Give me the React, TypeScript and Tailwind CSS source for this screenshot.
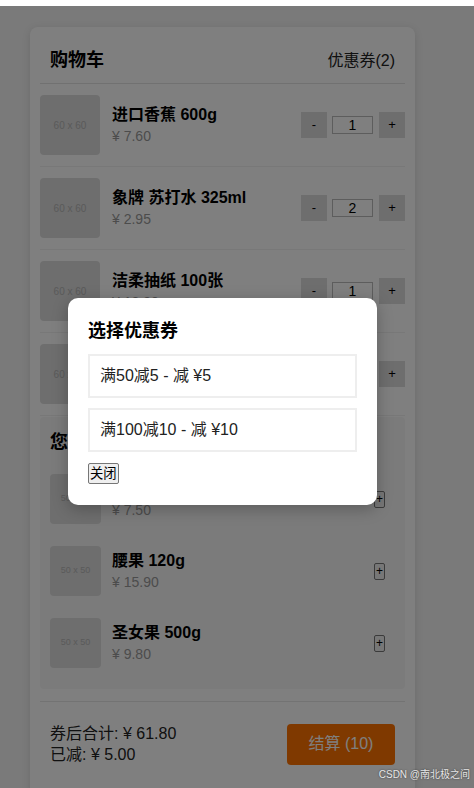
import React from "react";

const cartItems = [
  { name: "进口香蕉 600g", price: "7.60", qty: 1 },
  { name: "象牌 苏打水 325ml", price: "2.95", qty: 2 },
  { name: "洁柔抽纸 100张", price: "12.90", qty: 1 },
  { name: "农夫山泉 550ml", price: "2.00", qty: 6 },
];

const recItems = [
  { name: "蓝莓 125g", price: "7.50" },
  { name: "腰果 120g", price: "15.90" },
  { name: "圣女果 500g", price: "9.80" },
];

const coupons = ["满50减5 - 减 ¥5", "满100减10 - 减 ¥10"];

function CartRow({ name, price, qty }: { name: string; price: string; qty: number }) {
  return (
    <div className="flex items-center border-b border-[#f0f0f0] py-[11px]">
      <div className="flex h-[60px] w-[60px] shrink-0 items-center justify-center rounded-[4px] bg-[#dcdcdc] text-[10px] text-[#b5b5b5]">
        60 x 60
      </div>
      <div className="ml-[12px] flex-1">
        <div className="text-[16px] font-bold leading-[22px] text-black">{name}</div>
        <div className="text-[14px] leading-[20px] text-[#999]">¥ {price}</div>
      </div>
      <div className="flex items-center">
        <button className="h-[26px] w-[26px] bg-[#dddddd] text-[13px] text-black">-</button>
        <div className="ml-[5px] mr-[6px] flex h-[18px] w-[41px] items-center justify-center border border-[#bbb] bg-white text-[14px] text-black">
          {qty}
        </div>
        <button className="h-[26px] w-[26px] bg-[#dddddd] text-[13px] text-black">+</button>
      </div>
    </div>
  );
}

function RecRow({ name, price }: { name: string; price: string }) {
  return (
    <div className="flex items-center py-[11px]">
      <div className="flex h-[50px] w-[51px] shrink-0 items-center justify-center rounded-[4px] bg-[#dcdcdc] text-[9px] text-[#b5b5b5]">
        50 x 50
      </div>
      <div className="ml-[11px] flex-1">
        <div className="text-[16px] font-bold leading-[22px] text-black">{name}</div>
        <div className="text-[14px] leading-[20px] text-[#999]">¥ {price}</div>
      </div>
      <button className="mr-[10px] flex h-[17px] w-[11px] items-center justify-center rounded-[2px] border border-[#767676] bg-[#efefef] text-[12px] leading-none text-black">
        +
      </button>
    </div>
  );
}

export default function App() {
  return (
    <div className="relative h-[788px] overflow-hidden bg-white font-['Liberation_Sans','Noto_Sans_CJK_SC',sans-serif]">
      <div className="h-[6px] bg-white" />
      <div className="h-[782px] bg-[#f4f4f4] pt-[21px]">
        <div className="ml-[30px] w-[385px] rounded-[8px] bg-white p-[10px] shadow-[0_2px_8px_rgba(0,0,0,0.12)]">
          <div className="flex items-center justify-between border-b border-[#e2e2e2] px-[10px] pb-[9px] pt-[10px]">
            <h1 className="text-[18px] font-bold leading-[27px] text-black">购物车</h1>
            <span className="text-[16px] leading-[27px] text-[#222]">优惠券(2)</span>
          </div>
          {cartItems.map((it) => (
            <CartRow key={it.name} {...it} />
          ))}
          <div className="mt-[1px] rounded-[4px] bg-[#f6f6f6] px-[10px] pb-[10px] pt-[10px]">
            <h2 className="mb-[6px] text-[18px] font-bold leading-[30px] text-black">您可能还喜欢</h2>
            {recItems.map((it) => (
              <RecRow key={it.name} {...it} />
            ))}
          </div>
          <div className="mt-[12px] flex items-center justify-between border-t border-[#e6e6e6] px-[10px] pb-[21px] pt-[21px]">
            <div className="text-[16px] leading-[21px] text-[#222]">
              <div>券后合计: ¥ 61.80</div>
              <div>已减: ¥ 5.00</div>
            </div>
            <button className="h-[41px] w-[108px] rounded-[4px] bg-[#ff7200] text-[16px] text-white">
              结算 (10)
            </button>
          </div>
        </div>
      </div>

      <div className="absolute inset-x-0 bottom-0 top-[6px] bg-black/50" />

      <div className="absolute left-[68px] top-[298px] w-[309px] rounded-[10px] bg-white px-[20px] pb-[20px] pt-[20px] shadow-[0_4px_16px_rgba(0,0,0,0.25)]">
        <h3 className="mb-[9px] text-[18px] font-bold leading-[27px] text-black">选择优惠券</h3>
        <div className="flex flex-col gap-[10px]">
          {coupons.map((c) => (
            <div
              key={c}
              className="flex h-[44px] items-center border-2 border-[#eeeeee] px-[10px] text-[16px] text-[#222]"
            >
              {c}
            </div>
          ))}
        </div>
        <button className="mt-[11px] h-[21px] rounded-[2px] border border-[#767676] bg-[#efefef] px-[1px] text-[13.33px] leading-[19px] text-black">
          关闭
        </button>
      </div>

      <div className="absolute bottom-[6px] right-[4px] text-[10px] text-[#e8e8e8] [text-shadow:0_0_2px_rgba(0,0,0,0.6)]">
        CSDN @南北极之间
      </div>
    </div>
  );
}
